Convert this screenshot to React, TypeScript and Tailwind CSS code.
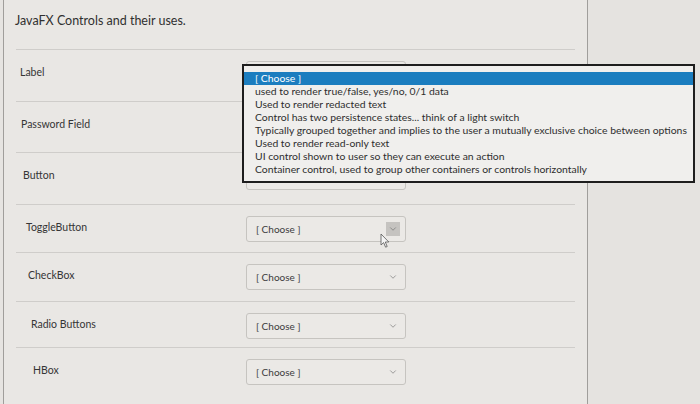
import { ChevronDown } from "lucide-react"

const rows = [
  { label: "Label", h: "h-[52px]", pl: "pl-[4px]", covered: true },
  { label: "Password Field", h: "h-[51px]", pl: "pl-[5px]", covered: true },
  { label: "Button", h: "h-[52px]", pl: "pl-[7px]", covered: true },
  { label: "ToggleButton", h: "h-[48px]", pl: "pl-[10px]", hover: true },
  { label: "CheckBox", h: "h-[49px]", pl: "pl-[12px]" },
  { label: "Radio Buttons", h: "h-[46px]", pl: "pl-[15px]" },
  { label: "HBox", h: "h-[56px]", pl: "pl-[17px]", last: true },
]

const options = [
  "used to render true/false, yes/no, 0/1 data",
  "Used to render redacted text",
  "Control has two persistence states... think of a light switch",
  "Typically grouped together and implies to the user a mutually exclusive choice between options",
  "Used to render read-only text",
  "UI control shown to user so they can execute an action",
  "Container control, used to group other containers or controls horizontally",
]

function Select({ hover, covered }: { hover?: boolean; covered?: boolean }) {
  return (
    <div className="relative flex h-[26px] w-[160px] items-center justify-between rounded-[3px] border border-[#c6c4c0] bg-[#ebe9e6] pl-[9px] pr-[5px]">
      {/* the open list hides the text of the first rows */}
      <span className="text-[10px] text-[#3c3c3c]">{covered ? "" : "[ Choose ]"}</span>
      <span className={`flex h-[14px] w-[14px] items-center justify-center ${hover ? "bg-[#c5c3c0]" : ""}`}>
        <ChevronDown className="h-[10px] w-[10px] text-[#6b6b6b]" strokeWidth={1.5} />
      </span>
      {hover && (
        <svg className="absolute left-[133px] top-[16px]" width="10" height="16" viewBox="0 0 10 16">
          <path d="M1 1 L1 12 L3.6 9.6 L5.6 14.2 L7.2 13.5 L5.3 9 L8.8 9 Z" fill="#f4f4f4" stroke="#555" strokeWidth="0.8" />
        </svg>
      )}
    </div>
  )
}

export default function App() {
  return (
    <div className="relative h-[404px] w-[700px] overflow-hidden bg-[#e6e4e1] font-['Lato','Open_Sans',sans-serif] text-[#353535]">
      <div className="flex h-full">
        <div className="ml-[3px] h-full w-[585px] border-x border-[#a09e9b] bg-[#e9e7e4]">
          <h1 className="pl-[11px] pt-[12px] text-[12.5px] leading-[17px] text-[#303030]">JavaFX Controls and their uses.</h1>
          <div className="mx-[12px] mt-[20px] border-t border-[#cfcdca]" />
          {rows.map((r) => (
            <div key={r.label} className={`${r.h} mx-[12px] flex ${r.last ? "" : "border-b border-[#cfcdca]"}`}>
              <div className={`${r.pl} w-[230px] shrink-0 pt-[15px] text-[10.5px] leading-[14px]`}>{r.label}</div>
              <div className="pt-[11px]">
                <Select hover={r.hover} covered={r.covered} />
              </div>
            </div>
          ))}
        </div>
        <div className="flex-1 bg-[#e5e3e0]" />
      </div>

      {/* open dropdown list */}
      <div className="absolute left-[242px] top-[64px] w-[453px] border-2 border-[#1e1e1e] bg-[#f0efed] pb-[5px] pt-[6px] text-[10.4px] leading-[13px] text-[#2e2e2e]">
        <div className="bg-[#1b7dbf] pl-[11px] text-white">[ Choose ]</div>
        {options.map((o) => (
          <div key={o} className="whitespace-nowrap pl-[11px]">
            {o}
          </div>
        ))}
      </div>
    </div>
  )
}
